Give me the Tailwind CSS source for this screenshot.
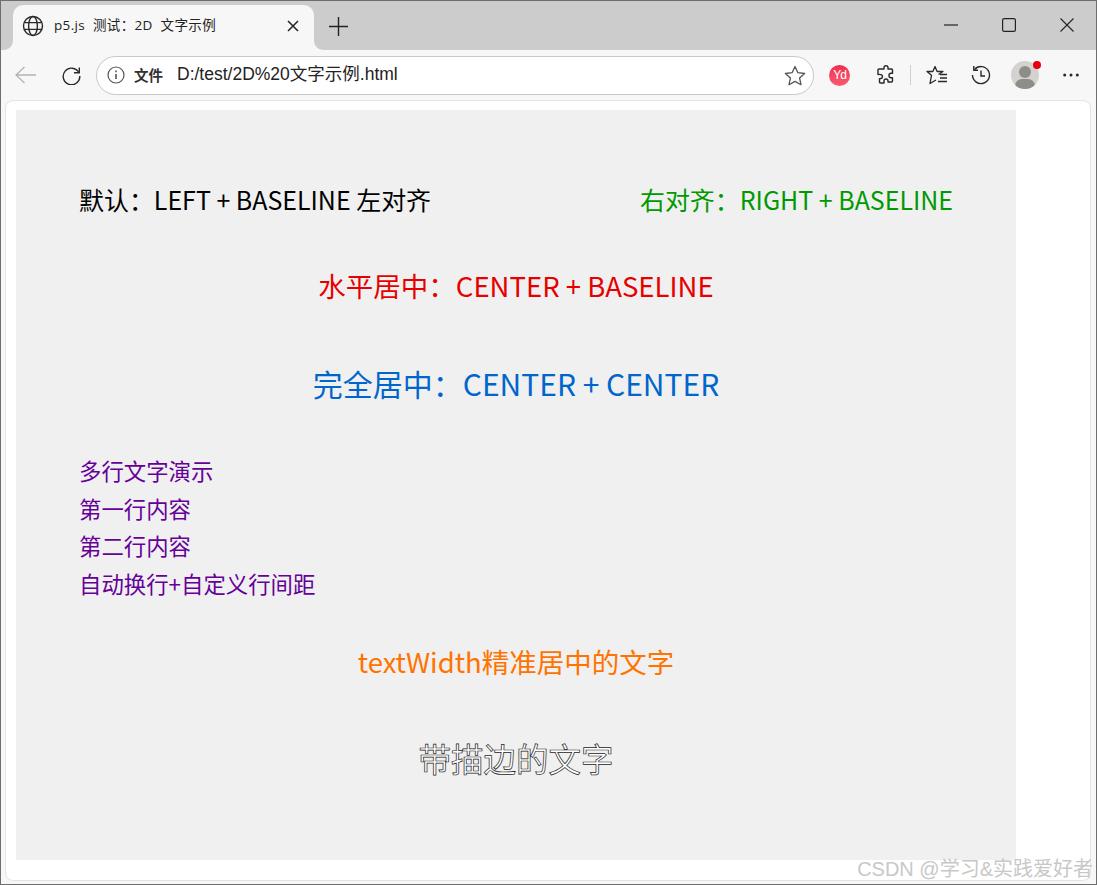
<!DOCTYPE html>
<html lang="zh-CN">
<head>
<meta charset="utf-8">
<title>p5.js 测试：2D 文字示例</title>
<script src="https://cdn.jsdelivr.net/npm/@tailwindcss/browser@4"></script>
</head>
<body class="m-0 overflow-hidden bg-white">
<div class="relative w-[1097px] h-[885px] flex flex-col overflow-hidden border border-[#6e6e6e] bg-[#f7f7f7] font-['Noto_Sans_CJK_SC','Noto_Sans',sans-serif]">
  <!-- left edge of the window behind -->
  <div class="absolute -left-px top-[200px] w-px h-[109px] bg-[#1a1a8c]"></div>
  <div class="absolute -left-px top-[309px] w-px h-[22px] bg-[#1c8c2c]"></div>
  <div class="absolute -left-px top-[566px] w-px h-[70px] bg-[#1a1a8c]"></div>

  <!-- tab strip -->
  <div class="h-[49px] shrink-0 bg-[#cccccc] flex items-end pl-[12px]">
    <div class="relative w-[301px] h-[45px] bg-[#f7f7f7] rounded-t-[10px] flex items-center pl-[9px] pr-[15px] pb-[3px]">
      <svg class="absolute -left-[10px] bottom-0 w-[10px] h-[10px]" viewBox="0 0 10 10" fill="#f7f7f7"><path d="M10 0v10H0c6 0 10-4 10-10z"/></svg>
      <svg class="absolute -right-[10px] bottom-0 w-[10px] h-[10px]" viewBox="0 0 10 10" fill="#f7f7f7"><path d="M0 0v10h10C4 10 0 6 0 0z"/></svg>
      <svg class="w-[22px] h-[22px] shrink-0" viewBox="0 0 22 22" fill="none" stroke="#2a2a2a" stroke-width="1.4"><circle cx="11" cy="11" r="9.5"/><ellipse cx="11" cy="11" rx="4.4" ry="9.5"/><path d="M2.2 7.6h17.6M2.2 14.4h17.6"/></svg>
      <span class="ml-[10px] text-[13.500px] leading-none text-[#222] tracking-[0.35px] [word-spacing:4px] font-['Open_Sans','Noto_Sans_CJK_SC',sans-serif] whitespace-nowrap">p5.js 测试：2D 文字示例</span>
      <svg class="ml-auto w-[12px] h-[12px]" viewBox="0 0 12 12" fill="none" stroke="#222" stroke-width="1.5"><path d="M1 1l10 10M11 1L1 11"/></svg>
    </div>
    <svg class="ml-[15px] mb-[14px] w-[19px] h-[19px]" viewBox="0 0 19 19" fill="none" stroke="#222" stroke-width="1.4"><path d="M9.5 0v19M0 9.5h19"/></svg>
    <div class="ml-auto flex items-center mb-[18px]">
      <svg class="w-[14px] h-[14px] mr-[44px]" viewBox="0 0 14 14" fill="none" stroke="#222" stroke-width="1.2"><path d="M0 7h14"/></svg>
      <svg class="w-[14px] h-[14px] mr-[44px]" viewBox="0 0 14 14" fill="none" stroke="#222" stroke-width="1.2"><rect x=".6" y=".6" width="12.8" height="12.8" rx="1.6"/></svg>
      <svg class="w-[14px] h-[14px] mr-[22px]" viewBox="0 0 14 14" fill="none" stroke="#222" stroke-width="1.1"><path d="M.5.5l13 13M13.5.5l-13 13"/></svg>
    </div>
  </div>

  <!-- toolbar -->
  <div class="h-[50px] shrink-0 bg-[#f7f7f7] flex items-center pl-[14px]">
    <svg class="w-[21px] h-[18px]" viewBox="0 0 21 18" fill="none" stroke="#b4b4b4" stroke-width="1.3"><path d="M21 9H1M9.5 1L1 9l8.500 8"/></svg>
    <svg class="ml-[26px] w-[19px] h-[19px]" viewBox="0 0 19 19" fill="none" stroke="#2a2a2a" stroke-width="1.4"><path d="M16.800 6.500A8.300 8.300 0 1 0 17.800 10"/><path d="M17.300 1.500v5.300h-5.300"/></svg>
    <div class="ml-[15px] w-[718px] h-[39px] rounded-full bg-white border border-[#c8c8c8] flex items-center pl-[10px] pr-[7px]">
      <svg class="w-[18px] h-[18px] shrink-0" viewBox="0 0 18 18" fill="none" stroke="#555" stroke-width="1.2"><circle cx="9" cy="9" r="8"/><path d="M9 8v5" stroke-width="1.6"/><path d="M9 4.600v1.600" stroke-width="1.6"/></svg>
      <span class="ml-[9px] text-[14.500px] leading-none font-bold text-[#333] whitespace-nowrap">文件</span>
      <span class="ml-[14px] text-[17.500px] leading-none text-[#222] whitespace-nowrap font-['Liberation_Sans','Noto_Sans_CJK_SC',sans-serif]">D:/test/2D%20文字示例.html</span>
      <svg class="ml-auto w-[22px] h-[21px]" viewBox="0 0 22 21" fill="none" stroke="#555" stroke-width="1.3" stroke-linejoin="round"><path d="M11 1.500l2.900 6.200 6.700.8-5 4.600 1.400 6.600L11 16.400l-6 3.300 1.400-6.600-5-4.600 6.700-.8z"/></svg>
    </div>
    <div class="ml-[15px] w-[21px] h-[21px] rounded-full bg-gradient-to-b from-[#ee2f4f] to-[#fb5a72] flex items-center justify-center text-[12px] leading-none tracking-[-1px] text-white font-['Liberation_Sans',sans-serif]">Yd</div>
    <svg class="ml-[26px] w-[20px] h-[20px]" viewBox="0 0 20 20" fill="none" stroke="#2a2a2a" stroke-width="1.4" stroke-linejoin="round"><path d="M8 2.500c0-2.400 4-2.400 4 0V4h3.500c.6 0 1 .4 1 1v3.300H15c-2.700 0-2.700 4.400 0 4.400h1.500V16c0 .6-.4 1-1 1H12v-1c0-2.600-4-2.600-4 0v2H4.500c-.6 0-1-.4-1-1v-3.300c2.500 0 3-1 3-2.200S5.500 9 2 9.500V5c0-.6.4-1 1-1h5z"/></svg>
    <div class="ml-[14px] w-px h-[20px] bg-[#d0d0d0]"></div>
    <svg class="ml-[15px] w-[22px] h-[20px]" viewBox="0 0 22 20" fill="none" stroke="#2a2a2a" stroke-width="1.3" stroke-linejoin="round"><path d="M12.500 9.500L17 6.500h-5.900L9 1.500 6.900 6.500H1l4.500 3.800L4 18.500l6-3.500"/><path d="M14 9.500h7M14 13h7M12 16.500h9"/></svg>
    <svg class="ml-[23px] w-[20px] h-[20px]" viewBox="0 0 20 20" fill="none" stroke="#2a2a2a" stroke-width="1.4"><path d="M3.500 4.600A8.500 8.500 0 1 1 1.500 10"/><path d="M2.800 1v4.200H7"/><path d="M10 5.500V11h4"/></svg>
    <div class="relative ml-[20px] w-[28px] h-[28px] rounded-full bg-[#d3d2cf] overflow-hidden">
      <div class="absolute left-[8px] top-[5px] w-[12px] h-[12px] rounded-full bg-[#8f8d8a]"></div>
      <div class="absolute left-[4px] top-[18px] w-[20px] h-[14px] rounded-full bg-[#8f8d8a]"></div>
    </div>
    <div class="absolute left-[1032px] top-[60px] w-[8px] h-[8px] rounded-full bg-[#e60012]"></div>
    <svg class="ml-[24px] w-[16px] h-[4px]" viewBox="0 0 16 4" fill="#2a2a2a"><circle cx="1.700" cy="2" r="1.500"/><circle cx="8" cy="2" r="1.500"/><circle cx="14.300" cy="2" r="1.500"/></svg>
  </div>

  <!-- page viewport -->
  <div class="relative ml-[4px] mr-[5px] mb-[3px] flex-1 bg-white rounded-[8px] border border-[#e4e4e4] pl-[10px] pt-[9px]">
    <!-- p5 canvas -->
    <div class="relative w-[1000px] h-[750px] bg-[#f0f0f0] text-[24.960px] leading-none whitespace-nowrap">
      <span class="absolute left-[63px] top-[77px] text-black">默认：LEFT + BASELINE 左对齐</span>
      <span class="absolute right-[63px] top-[77px] text-[#009900]">右对齐：RIGHT + BASELINE</span>
      <span class="absolute left-0 right-0 top-[162px] text-center text-[27.500px] text-[#e60000]">水平居中：CENTER + BASELINE</span>
      <span class="absolute left-0 right-0 top-[258px] text-center text-[30px] text-[#0066cc]">完全居中：CENTER + CENTER</span>
      <div class="absolute left-[63px] top-[342px] text-[22.400px] leading-[37.500px] text-[#660099]">
        <p>多行文字演示</p>
        <p>第一行内容</p>
        <p>第二行内容</p>
        <p>自动换行+自定义行间距</p>
      </div>
      <span class="absolute left-0 right-0 top-[538px] text-center text-[27.500px] text-[#ff7300]">textWidth精准居中的文字</span>
      <span class="absolute left-0 right-0 top-[632px] text-center text-[32.500px] text-white [-webkit-text-stroke:0.7px_#222]">带描边的文字</span>
    </div>
  </div>

  <!-- watermark -->
  <span class="absolute right-[3px] bottom-[5px] text-[20px] leading-none text-[#c8c8c8] whitespace-nowrap font-['Liberation_Sans','Noto_Sans_CJK_SC',sans-serif]">CSDN @学习&amp;实践爱好者</span>
</div>
</body>
</html>
